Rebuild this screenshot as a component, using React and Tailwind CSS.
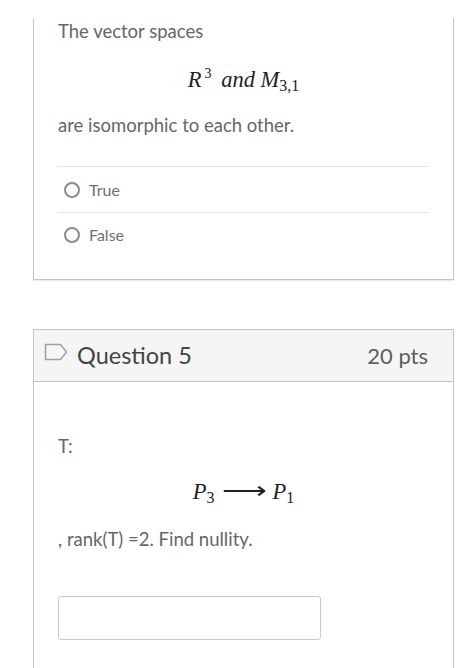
export default function App() {
  const sans = { fontFamily: 'Lato, "Open Sans", sans-serif' };
  return (
    <div className="w-[474px] h-[668px] overflow-hidden bg-white" style={sans}>
      <div className="h-[27px]" />

      <div className="ml-[33px] w-[421px] border-x border-b border-[#c4c4c4] shadow-[0_1px_1px_rgba(0,0,0,0.08)]">
        <div className="px-[24px] text-[18.5px] leading-[26px] text-[#666]">
          <p className="-mt-[9px]">The vector spaces</p>
          <p className="mt-[23px] text-center text-[22.5px] leading-[26px] font-['Liberation_Serif',serif] text-[#222]">
            <i>R</i>
            <sup className="text-[14px] leading-[0] ml-[3px] mr-[4px] -top-[0.65em]">3</sup>
            <i> and </i>
            <i>M</i>
            <sub className="text-[16px] leading-[0]">3,1</sub>
          </p>
          <p className="mt-[19px]">are isomorphic to each other.</p>

          <div className="mt-[28px] border-t border-[#e2e2e2]">
            <label className="flex items-center h-[45px] gap-[9px] pl-[6px] text-[16px] text-[#707070]">
              <span className="w-[16px] h-[16px] rounded-full border-2 border-[#8c8c8c]" />
              True
            </label>
            <label className="flex items-center h-[45px] gap-[9px] pl-[6px] text-[16px] text-[#707070] border-t border-[#e2e2e2]">
              <span className="w-[16px] h-[16px] rounded-full border-2 border-[#8c8c8c]" />
              False
            </label>
          </div>
          <div className="h-[22px]" />
        </div>
      </div>

      <div className="h-[49px]" />

      <div className="ml-[33px] w-[421px] border border-[#c4c4c4] h-[400px]">
        <div className="h-[52px] bg-[#f5f5f5] border-b border-[#c4c4c4] flex items-center pl-[10px] pr-[25px]">
          <svg width="24" height="18" viewBox="0 0 24 18" className="mr-[9px] -mt-[8px]">
            <path d="M1.5 1.5 H16.5 L22.5 9 L16.5 16.5 H1.5 Z" fill="none" stroke="#95a2ab" strokeWidth="1.5" strokeLinejoin="round" />
          </svg>
          <span className="text-[23.5px] text-[#444]">Question 5</span>
          <span className="ml-auto text-[22px] text-[#5e5e5e]">20 pts</span>
        </div>

        <div className="px-[24px] text-[18.5px] leading-[26px] text-[#666]">
          <p className="mt-[51px]">T:</p>
          <p className="mt-[20px] text-center text-[22.5px] leading-[26px] font-['Liberation_Serif',serif] text-[#222]">
            <i>P</i>
            <sub className="text-[16px] leading-[0]">3</sub>
            <span className="inline-block mx-[12px] text-[24px] leading-[0] scale-x-[1.3]">⟶</span>
            <i>P</i>
            <sub className="text-[16px] leading-[0]">1</sub>
          </p>
          <p className="mt-[21px]">, rank(T) =2. Find nullity.</p>
          <input
            type="text"
            className="block mt-[44px] w-[263px] h-[44px] border border-[#c8c8c8] rounded-[3px] outline-none"
          />
        </div>
      </div>
    </div>
  );
}
